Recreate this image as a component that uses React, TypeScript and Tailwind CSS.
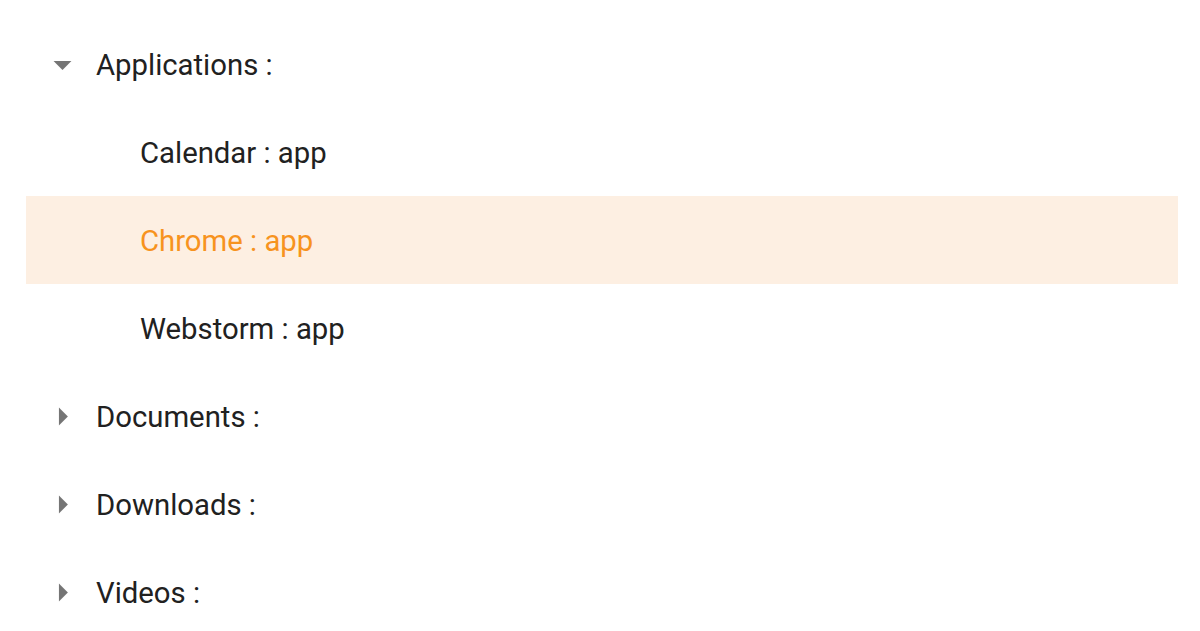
import React from 'react';

type Node = {
  label: string;
  children?: Node[];
  open?: boolean;
  selected?: boolean;
};

const tree: Node[] = [
  {
    label: 'Applications :',
    open: true,
    children: [
      { label: 'Calendar : app' },
      { label: 'Chrome : app', selected: true },
      { label: 'Webstorm : app' },
    ],
  },
  { label: 'Documents :', children: [] },
  { label: 'Downloads :', children: [] },
  { label: 'Videos :', children: [] },
];

function Caret({ open }: { open: boolean }) {
  return (
    <svg viewBox="0 0 24 24" className="h-[43px] w-[43px] fill-[#757575]">
      {open ? <path d="M7 10l5 5 5-5z" /> : <path d="M10 17l5-5-5-5v10z" />}
    </svg>
  );
}

function TreeRow({ node, depth }: { node: Node; depth: number }) {
  const hasKids = node.children !== undefined;
  return (
    <>
      <div
        className={`flex h-[88px] items-center pl-[15px] ${node.selected ? 'bg-[#fdefe2]' : ''}`}
      >
        <div style={{ width: depth * 44 }} className="shrink-0" />
        <div className="flex w-[43px] shrink-0 items-center justify-center">
          {hasKids && <Caret open={!!node.open} />}
        </div>
        <span
          className={`ml-[12px] mt-[3px] text-[29.3px] leading-none ${node.selected ? 'text-[#f7931e]' : 'text-[#212121]'}`}
        >
          {node.label}
        </span>
      </div>
      {node.open && node.children?.map((c) => <TreeRow key={c.label} node={c} depth={depth + 1} />)}
    </>
  );
}

export default function App() {
  return (
    <div className="h-[631px] w-[1200px] overflow-hidden bg-white font-['Roboto',sans-serif]">
      <div className="pl-[26px] pr-[22px] pt-[20px]">
        {tree.map((n) => (
          <TreeRow key={n.label} node={n} depth={0} />
        ))}
      </div>
    </div>
  );
}
